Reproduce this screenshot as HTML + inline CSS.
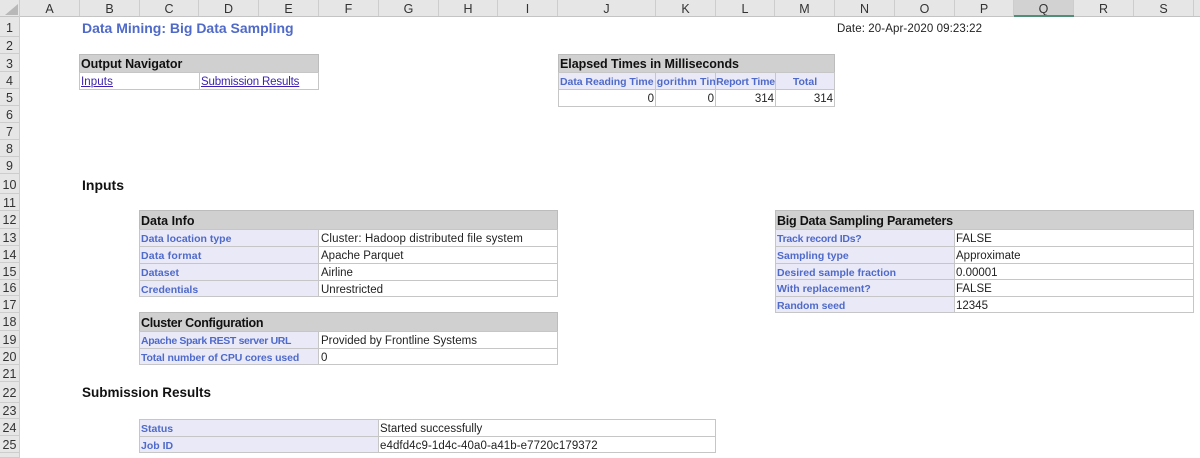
<!DOCTYPE html>
<html><head><meta charset="utf-8"><style>
html,body{margin:0;padding:0;background:#fff}
#p{position:relative;width:1200px;height:458px;overflow:hidden;background:#fff;font-family:"Liberation Sans",sans-serif;font-size:11.5px;color:#222;filter:blur(.3px)}
#p div{position:absolute;white-space:nowrap}
.ch{top:0;height:16px;background:#e6e6e6;border-right:1px solid #cdcdcd;text-align:center;line-height:18px;font-size:12.5px;color:#333;box-sizing:border-box}
.rh{left:0;width:19px;background:#e6e6e6;border-bottom:1px solid #cdcdcd;text-align:center;font-size:12.5px;color:#333;box-sizing:border-box}
.g{background:#d0d0d0;border:1px solid #bcbcbc;box-sizing:border-box;font-weight:bold;font-size:12.5px;color:#111;padding-left:1px;overflow:hidden}
.l{background:#e9e9f8;border:1px solid #c6c6c6;box-sizing:border-box;font-weight:bold;font-size:10.5px;color:#4f6ac8;padding-left:1px;overflow:hidden;line-height:18px}
.v{background:#fff;border:1px solid #c6c6c6;box-sizing:border-box;padding-left:1px;overflow:hidden;line-height:18px}
.w{padding-left:2px}
.r{text-align:right;padding-right:1px}
.c{text-align:center;padding:0}
a{color:#3b1fb0;text-decoration:underline}
.h{font-weight:bold;color:#111}
</style></head><body><div id="p">
<div style="left:0;top:0;width:1200px;height:17px;background:#e6e6e6"></div>
<div style="left:0;top:16px;width:1200px;height:1px;background:#c4c4c4"></div>
<div style="left:19px;top:0;width:1px;height:458px;background:#cdcdcd"></div>
<svg style="position:absolute;left:0;top:0" width="20" height="17"><path d="M5 15H18V4Z" fill="#b8b8b8"/></svg>
<div class="ch" style="left:20px;width:60px">A</div>
<div class="ch" style="left:80px;width:60px">B</div>
<div class="ch" style="left:140px;width:59px">C</div>
<div class="ch" style="left:199px;width:60px">D</div>
<div class="ch" style="left:259px;width:60px">E</div>
<div class="ch" style="left:319px;width:60px">F</div>
<div class="ch" style="left:379px;width:60px">G</div>
<div class="ch" style="left:439px;width:59px">H</div>
<div class="ch" style="left:498px;width:60px">I</div>
<div class="ch" style="left:558px;width:98px">J</div>
<div class="ch" style="left:656px;width:60px">K</div>
<div class="ch" style="left:716px;width:59px">L</div>
<div class="ch" style="left:775px;width:60px">M</div>
<div class="ch" style="left:835px;width:60px">N</div>
<div class="ch" style="left:895px;width:60px">O</div>
<div class="ch" style="left:955px;width:59px">P</div>
<div class="ch" style="left:1014px;width:60px;background:#d2d2d2;height:15px;line-height:18px;overflow:hidden">Q</div>
<div style="left:1014px;top:15px;width:60px;height:2px;background:#4f8f76"></div>
<div class="ch" style="left:1074px;width:60px">R</div>
<div class="ch" style="left:1134px;width:60px">S</div>

<div class="rh" style="top:17px;height:20px;line-height:22px">1</div>
<div class="rh" style="top:37px;height:17px;line-height:18px">2</div>
<div class="rh" style="top:54px;height:18px;line-height:20px">3</div>
<div class="rh" style="top:72px;height:17px;line-height:18px">4</div>
<div class="rh" style="top:89px;height:17px;line-height:18px">5</div>
<div class="rh" style="top:106px;height:17px;line-height:18px">6</div>
<div class="rh" style="top:123px;height:17px;line-height:18px">7</div>
<div class="rh" style="top:140px;height:17px;line-height:18px">8</div>
<div class="rh" style="top:157px;height:17px;line-height:18px">9</div>
<div class="rh" style="top:174px;height:20px;line-height:22px">10</div>
<div class="rh" style="top:194px;height:17px;line-height:18px">11</div>
<div class="rh" style="top:211px;height:18px;line-height:19px">12</div>
<div class="rh" style="top:229px;height:17px;line-height:18px">13</div>
<div class="rh" style="top:246px;height:17px;line-height:18px">14</div>
<div class="rh" style="top:263px;height:17px;line-height:18px">15</div>
<div class="rh" style="top:280px;height:16px;line-height:17px">16</div>
<div class="rh" style="top:296px;height:17px;line-height:18px">17</div>
<div class="rh" style="top:313px;height:18px;line-height:19px">18</div>
<div class="rh" style="top:331px;height:17px;line-height:18px">19</div>
<div class="rh" style="top:348px;height:17px;line-height:18px">20</div>
<div class="rh" style="top:365px;height:17px;line-height:18px">21</div>
<div class="rh" style="top:382px;height:21px;line-height:23px">22</div>
<div class="rh" style="top:403px;height:16px;line-height:17px">23</div>
<div class="rh" style="top:419px;height:17px;line-height:18px">24</div>
<div class="rh" style="top:436px;height:17px;line-height:18px">25</div>
<div class="rh" style="top:453px;height:5px;line-height:18px;overflow:hidden">26</div>

<div style="left:82px;top:20px;font-weight:bold;font-size:14px;color:#4f6ac8;line-height:17px;letter-spacing:0">Data Mining: Big Data Sampling</div>
<div style="left:837px;top:22px;line-height:15px;font-size:11.5px;letter-spacing:.1px">Date: 20-Apr-2020 09:23:22</div>

<div class="g" style="left:79px;top:54px;width:240px;height:19px;line-height:19px;letter-spacing:-.05px">Output Navigator</div>
<div class="v" style="left:79px;top:72px;width:121px;height:18px"><a style="letter-spacing:.1px">Inputs</a></div>
<div class="v" style="left:199px;top:72px;width:120px;height:18px"><a style="letter-spacing:-.15px">Submission Results</a></div>

<div class="g" style="left:558px;top:54px;width:277px;height:19px;line-height:19px;letter-spacing:-.05px">Elapsed Times in Milliseconds</div>
<div class="l" style="left:558px;top:72px;width:98px;height:18px;letter-spacing:-.05px">Data Reading Time</div>
<div class="l" style="left:655px;top:72px;width:61px;height:18px;padding:0"><span style="position:absolute;right:-1px;top:0;letter-spacing:.15px">gorithm Tin</span></div>
<div class="l c" style="left:715px;top:72px;width:61px;height:18px;letter-spacing:-.2px">Report Time</div>
<div class="l c" style="left:775px;top:72px;width:60px;height:18px">Total</div>
<div class="v r" style="left:558px;top:89px;width:98px;height:18px">0</div>
<div class="v r" style="left:655px;top:89px;width:61px;height:18px">0</div>
<div class="v r" style="left:715px;top:89px;width:61px;height:18px">314</div>
<div class="v r" style="left:775px;top:89px;width:60px;height:18px">314</div>

<div class="h" style="left:82px;top:177px;line-height:16px;font-size:14px">Inputs</div>

<div class="g" style="left:139px;top:210px;width:419px;height:20px;line-height:20px">Data Info</div>
<div class="l" style="left:139px;top:229px;width:180px;height:18px">Data location type</div>
<div class="v w" style="left:318px;top:229px;width:240px;height:18px;letter-spacing:.13px">Cluster: Hadoop distributed file system</div>
<div class="l" style="left:139px;top:246px;width:180px;height:18px;letter-spacing:.2px">Data format</div>
<div class="v w" style="left:318px;top:246px;width:240px;height:18px">Apache Parquet</div>
<div class="l" style="left:139px;top:263px;width:180px;height:18px">Dataset</div>
<div class="v w" style="left:318px;top:263px;width:240px;height:18px">Airline</div>
<div class="l" style="left:139px;top:280px;width:180px;height:17px">Credentials</div>
<div class="v w" style="left:318px;top:280px;width:240px;height:17px">Unrestricted</div>

<div class="g" style="left:139px;top:312px;width:419px;height:20px;line-height:20px;letter-spacing:-.3px">Cluster Configuration</div>
<div class="l" style="left:139px;top:331px;width:180px;height:18px;letter-spacing:-.35px">Apache Spark REST server URL</div>
<div class="v w" style="left:318px;top:331px;width:240px;height:18px">Provided by Frontline Systems</div>
<div class="l" style="left:139px;top:348px;width:180px;height:17px;letter-spacing:-.13px">Total number of CPU cores used</div>
<div class="v w" style="left:318px;top:348px;width:240px;height:17px">0</div>

<div class="h" style="left:82px;top:385px;line-height:16px;font-size:13.5px">Submission Results</div>

<div class="l" style="left:139px;top:419px;width:240px;height:18px">Status</div>
<div class="v" style="left:378px;top:419px;width:338px;height:18px">Started successfully</div>
<div class="l" style="left:139px;top:436px;width:240px;height:17px">Job ID</div>
<div class="v" style="left:378px;top:436px;width:338px;height:17px;letter-spacing:.08px">e4dfd4c9-1d4c-40a0-a41b-e7720c179372</div>

<div class="g" style="left:775px;top:210px;width:419px;height:20px;line-height:20px;letter-spacing:-.22px">Big Data Sampling Parameters</div>
<div class="l" style="left:775px;top:229px;width:180px;height:18px;letter-spacing:-.25px">Track record IDs?</div>
<div class="v" style="left:954px;top:229px;width:240px;height:18px">FALSE</div>
<div class="l" style="left:775px;top:246px;width:180px;height:18px">Sampling type</div>
<div class="v" style="left:954px;top:246px;width:240px;height:18px">Approximate</div>
<div class="l" style="left:775px;top:263px;width:180px;height:17px">Desired sample fraction</div>
<div class="v" style="left:954px;top:263px;width:240px;height:17px">0.00001</div>
<div class="l" style="left:775px;top:279px;width:180px;height:18px">With replacement?</div>
<div class="v" style="left:954px;top:279px;width:240px;height:18px">FALSE</div>
<div class="l" style="left:775px;top:296px;width:180px;height:17px;letter-spacing:-.05px">Random seed</div>
<div class="v" style="left:954px;top:296px;width:240px;height:17px">12345</div>
</div></body></html>
